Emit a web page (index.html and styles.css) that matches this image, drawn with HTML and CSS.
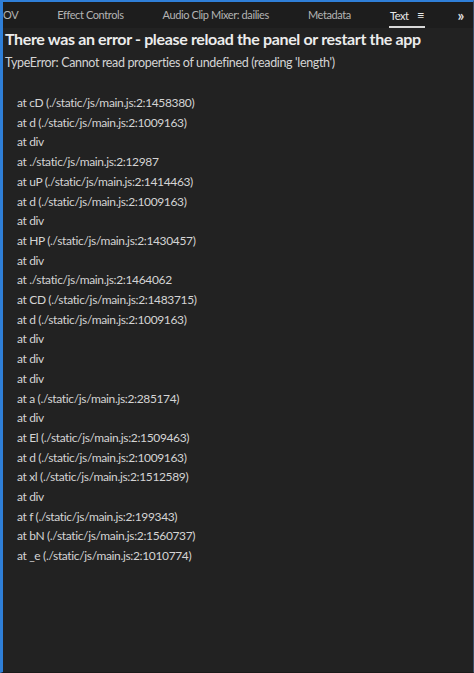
FILE: index.html
```html
<!DOCTYPE html>
<html lang="en">
<head>
  <meta charset="UTF-8" />
  <meta name="viewport" content="width=device-width, initial-scale=1.0" />
  <title>Text Panel</title>
  <link rel="stylesheet" href="styles.css">
</head>
<body>
  <div class="panel">
    <div class="tab-bar">
      <div class="tab-list">
        <div class="tab">OV</div>
        <div class="tab">Effect Controls</div>
        <div class="tab">Audio Clip Mixer: dailies</div>
        <div class="tab">Metadata</div>
        <div class="tab tab-active">Text <span class="tab-menu">&#8801;</span></div>
      </div>
      <div class="tab-more">&raquo;</div>
    </div>
    <div class="error-view">
      <h2 class="error-title">There was an error - please reload the panel or restart the app</h2>
      <div class="error-message">TypeError: Cannot read properties of undefined (reading 'length')</div>
      <div class="error-stack" id="errorStack"></div>
    </div>
  </div>
  <script>
    const frames = [
      "cD (./static/js/main.js:2:1458380)",
      "d (./static/js/main.js:2:1009163)",
      "div",
      "./static/js/main.js:2:12987",
      "uP (./static/js/main.js:2:1414463)",
      "d (./static/js/main.js:2:1009163)",
      "div",
      "HP (./static/js/main.js:2:1430457)",
      "div",
      "./static/js/main.js:2:1464062",
      "CD (./static/js/main.js:2:1483715)",
      "d (./static/js/main.js:2:1009163)",
      "div",
      "div",
      "div",
      "a (./static/js/main.js:2:285174)",
      "div",
      "El (./static/js/main.js:2:1509463)",
      "d (./static/js/main.js:2:1009163)",
      "xl (./static/js/main.js:2:1512589)",
      "div",
      "f (./static/js/main.js:2:199343)",
      "bN (./static/js/main.js:2:1560737)",
      "_e (./static/js/main.js:2:1010774)"
    ];

    document.getElementById('errorStack').innerHTML = frames
      .map(f => `<div class="stack-line">at ${f}</div>`)
      .join('');
  </script>
</body>
</html>
```

FILE: styles.css
```css
:root {
  --panel-bg: #222222;
  --tab-bg: #1d1d1d;
  --focus: #2f7fd8;
  --text-color: #d4d4d4;
  --title-color: #ececec;
  --tab-text: #b4b4b4;
}

html, body {
  margin: 0;
  height: 100%;
  background: #1a1a1a;
}

body {
  font-family: 'Lato', sans-serif;
}

.panel {
  box-sizing: border-box;
  height: 100%;
  background: var(--panel-bg);
  border: 2px solid var(--focus);
  border-left-width: 3px;
  border-right: 1px solid #3a4f6a;
  border-bottom: 1px solid #1a1a1a;
  display: flex;
  flex-direction: column;
}

.tab-bar {
  height: 26px;
  background: var(--tab-bg);
  display: flex;
  align-items: center;
  flex-shrink: 0;
  font-size: 11px;
  letter-spacing: -0.4px;
  color: var(--tab-text);
}

.tab-list {
  flex: 1;
  display: flex;
  gap: 39px;
  white-space: nowrap;
  overflow: hidden;
}

.tab {
  position: relative;
  line-height: 26px;
}

.tab-active {
  color: #e8e8e8;
}

.tab-active::after {
  content: "";
  position: absolute;
  left: -1px;
  right: -1px;
  bottom: 1px;
  height: 2px;
  background: #d8d8d8;
}

.tab-menu {
  margin-left: 6px;
  font-size: 13px;
}

.tab-more {
  margin: 0 9px 0 4px;
  font-size: 15px;
  font-weight: bold;
  color: #e0e0e0;
}

.error-view {
  padding-left: 2px;
  color: var(--text-color);
}

.error-title {
  margin: 1px 0 0;
  font-size: 16px;
  font-weight: bold;
  letter-spacing: -0.35px;
  color: var(--title-color);
}

.error-message {
  margin-top: 7px;
  font-size: 12.5px;
  letter-spacing: -0.35px;
}

.error-stack {
  margin-top: 23px;
  padding-left: 12px;
  font-size: 12px;
  letter-spacing: -0.35px;
}

.stack-line {
  line-height: 19.7px;
}
```
